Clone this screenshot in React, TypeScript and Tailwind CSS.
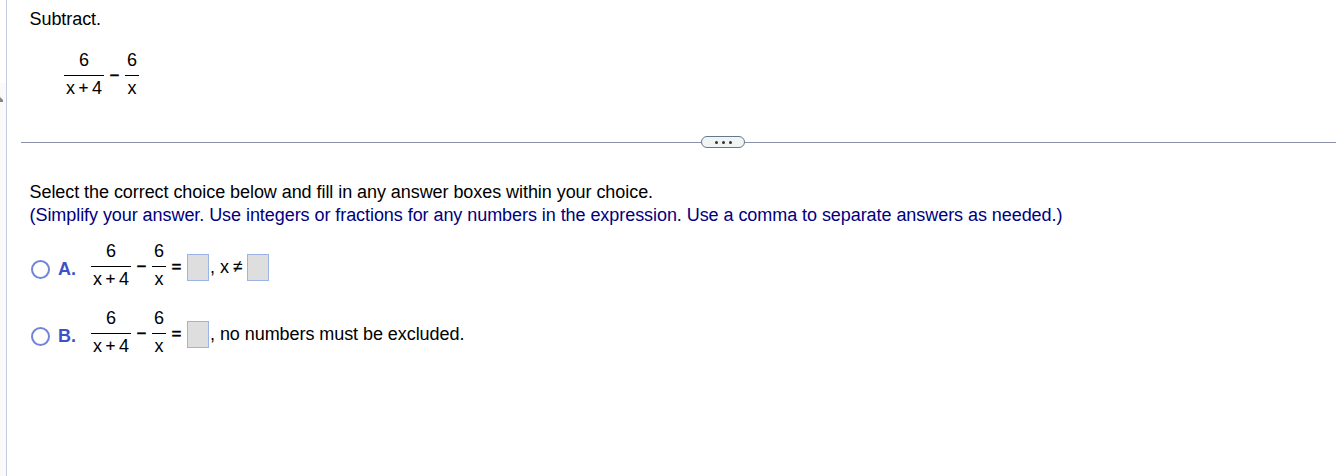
import { ReactNode } from "react";

function Fraction({ top, bottom, width }: { top: string; bottom: ReactNode; width: string }) {
  return (
    <span className={`flex flex-col items-center ${width}`}>
      <span className="pb-[5px]">{top}</span>
      <span className="flex w-full justify-center border-t border-black pt-[2px]">{bottom}</span>
    </span>
  );
}

function Expression() {
  return (
    <span className="flex items-start leading-5">
      <Fraction
        top="6"
        width="w-10"
        bottom={
          <span className="flex gap-[3px]">
            <span>x</span>
            <span className="flex w-[11px] justify-center text-[17px] [-webkit-text-stroke:0.2px_black]">+</span>
            <span>4</span>
          </span>
        }
      />
      <span className="mt-4 flex w-[21px] justify-center text-[17px] [-webkit-text-stroke:0.4px_black]">−</span>
      <Fraction top="6" width="w-[14px]" bottom="x" />
    </span>
  );
}

function AnswerBox() {
  return <span className="mt-[13px] h-[27px] w-[22px] border border-[#9bb4e6] bg-[#dedede]" />;
}

function Choice({ label, children }: { label: string; children: ReactNode }) {
  return (
    <label className="flex h-[67px] items-start leading-5">
      <span className="ml-px mt-[19px] h-[19px] w-[19px] rounded-full border-2 border-[#7385d9] bg-white" />
      <span className="ml-[8px] mt-[18px] w-[33px] font-bold text-[#3c50c8]">{label}</span>
      <Expression />
      <span className="mt-4 ml-[5px] w-4 pl-[0.5px] text-[17px] [-webkit-text-stroke:0.4px_black]">=</span>
      {children}
    </label>
  );
}

export default function App() {
  return (
    <div className="flex h-[476px] overflow-hidden bg-white font-['Liberation_Sans',Arial,sans-serif] text-[18px] tracking-[-0.06px] text-black">
      <aside className="w-[7px] shrink-0 border-r border-[#c5cce0] pt-[83px]">
        <div className="h-[393px] bg-[#fafafa] pt-[13px]">
          <svg width="3" height="7" viewBox="0 0 3 7">
            <path d="M0 1L3 4V6H0Z" fill="#858585" />
          </svg>
        </div>
      </aside>

      <main className="min-w-0 flex-1 pl-[14px]">
        <section className="h-[136px] pl-[9px] pt-2">
          <p className="-ml-[0.5px] leading-[23px]">Subtract.</p>
          <div className="ml-[34px] mt-[19px]">
            <Expression />
          </div>
        </section>

        <div className="flex h-3 items-center">
          <span className="h-px w-[680px] bg-[#8990a8]" />
          <button className="flex h-3 w-11 items-center justify-center gap-1 rounded-full border border-[#65788b] bg-[#f0f4f5]">
            {[0, 1, 2].map((dot) => (
              <span key={dot} className="h-[3px] w-[3px] rounded-full bg-[#333333]" />
            ))}
          </button>
          <span className="h-px flex-1 bg-[#8990a8]" />
        </div>

        <section className="pl-[9px] pt-[33px]">
          <p className="-ml-[0.5px] leading-[23px]">
            Select the correct choice below and fill in any answer boxes within your choice.
          </p>
          <p className="-ml-[0.5px] leading-[23px] text-[#000080]">
            (Simplify your answer. Use integers or fractions for any numbers in the expression. Use a comma to separate answers as needed.)
          </p>
          <div className="mt-[14px]">
            <Choice label="A.">
              <AnswerBox />
              <span className="mt-4 w-[10px] pl-px">,</span>
              <span className="mt-4 w-[13px] pl-px">x</span>
              <span className="mt-4 w-[15px] pl-px text-[17px] [-webkit-text-stroke:0.2px_black]">≠</span>
              <AnswerBox />
            </Choice>
            <Choice label="B.">
              <AnswerBox />
              <span className="mt-4 pl-px">, no numbers must be excluded.</span>
            </Choice>
          </div>
        </section>
      </main>
    </div>
  );
}
